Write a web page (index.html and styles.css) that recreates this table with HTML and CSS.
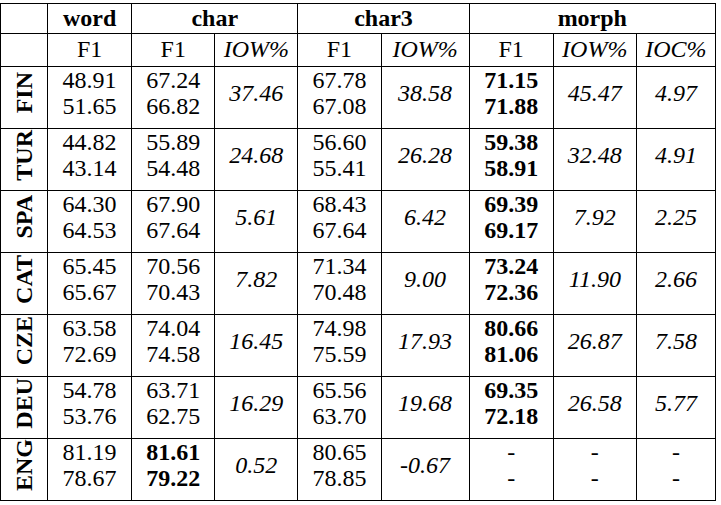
FILE: index.html
```html
<!DOCTYPE html>
<html>
<head>
<meta charset="utf-8">
<link rel="stylesheet" href="styles.css">
</head>
<body>
<table class="results">
  <colgroup>
    <col class="c-lang"><col class="c-word"><col class="c-f1"><col class="c-iow"><col class="c-f1"><col class="c-iow3"><col class="c-f1m"><col class="c-iowm"><col class="c-ioc">
  </colgroup>
  <tr class="head">
    <th></th><th>word</th><th colspan="2">char</th><th colspan="2">char3</th><th colspan="3">morph</th>
  </tr>
  <tr class="sub">
    <td></td><td>F1</td><td>F1</td><td class="it">IOW%</td><td>F1</td><td class="it">IOW%</td><td>F1</td><td class="it">IOW%</td><td class="it">IOC%</td>
  </tr>
  <tr class="row">
    <th class="lang"><span>FIN</span></th>
    <td>48.91<br>51.65</td><td>67.24<br>66.82</td><td class="it one">37.46</td>
    <td>67.78<br>67.08</td><td class="it one">38.58</td>
    <td class="b">71.15<br>71.88</td><td class="it one">45.47</td><td class="it one">4.97</td>
  </tr>
  <tr class="row">
    <th class="lang"><span>TUR</span></th>
    <td>44.82<br>43.14</td><td>55.89<br>54.48</td><td class="it one">24.68</td>
    <td>56.60<br>55.41</td><td class="it one">26.28</td>
    <td class="b">59.38<br>58.91</td><td class="it one">32.48</td><td class="it one">4.91</td>
  </tr>
  <tr class="row">
    <th class="lang"><span>SPA</span></th>
    <td>64.30<br>64.53</td><td>67.90<br>67.64</td><td class="it one">5.61</td>
    <td>68.43<br>67.64</td><td class="it one">6.42</td>
    <td class="b">69.39<br>69.17</td><td class="it one">7.92</td><td class="it one">2.25</td>
  </tr>
  <tr class="row">
    <th class="lang"><span>CAT</span></th>
    <td>65.45<br>65.67</td><td>70.56<br>70.43</td><td class="it one">7.82</td>
    <td>71.34<br>70.48</td><td class="it one">9.00</td>
    <td class="b">73.24<br>72.36</td><td class="it one">11.90</td><td class="it one">2.66</td>
  </tr>
  <tr class="row">
    <th class="lang"><span>CZE</span></th>
    <td>63.58<br>72.69</td><td>74.04<br>74.58</td><td class="it one">16.45</td>
    <td>74.98<br>75.59</td><td class="it one">17.93</td>
    <td class="b">80.66<br>81.06</td><td class="it one">26.87</td><td class="it one">7.58</td>
  </tr>
  <tr class="row">
    <th class="lang"><span>DEU</span></th>
    <td>54.78<br>53.76</td><td>63.71<br>62.75</td><td class="it one">16.29</td>
    <td>65.56<br>63.70</td><td class="it one">19.68</td>
    <td class="b">69.35<br>72.18</td><td class="it one">26.58</td><td class="it one">5.77</td>
  </tr>
  <tr class="row">
    <th class="lang"><span>ENG</span></th>
    <td>81.19<br>78.67</td><td class="b">81.61<br>79.22</td><td class="it one">0.52</td>
    <td>80.65<br>78.85</td><td class="it one">-0.67</td>
    <td>-<br>-</td><td>-<br>-</td><td>-<br>-</td>
  </tr>
</table>
</body>
</html>
```
FILE: styles.css
```css
html, body {
  margin: 0;
  padding: 0;
  background: #fff;
}
body {
  padding-top: 3px;
  font-family: "Liberation Serif", "Times New Roman", serif;
  color: #000;
}
.results {
  border-collapse: collapse;
  table-layout: fixed;
  width: 716px;
  font-size: 24px;
}
.c-lang { width: 47px; }
.c-word { width: 84px; }
.c-f1 { width: 83px; }
.c-iow { width: 83px; }
.c-iow3 { width: 88px; }
.c-f1m { width: 84px; }
.c-iowm { width: 83px; }
.c-ioc { width: 79px; }
.results th, .results td {
  border: 1px solid #000;
  text-align: center;
  padding: 0;
}
.head th {
  font-weight: bold;
  line-height: 28px;
  padding: 0 0 1px;
}
.sub td {
  line-height: 26px;
  padding: 2px 0 4px;
}
.it { font-style: italic; }
.b { font-weight: bold; }
.row td, .row th {
  line-height: 26px;
  padding: 0 0 9px;
  vertical-align: middle;
}
.lang span {
  display: block;
  margin: 0 auto;
  width: 24px;
  writing-mode: vertical-rl;
  transform: rotate(180deg);
  font-weight: bold;
  line-height: 24px;
}
```
